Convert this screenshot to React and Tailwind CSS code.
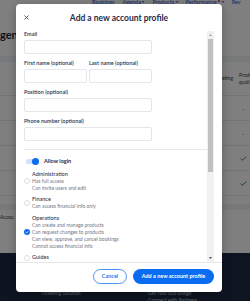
import React from 'react';

const roles = [
    { name: 'Administration', lines: ['Has full access', 'Can invite users and edit'], checked: false },
    { name: 'Finance', lines: ['Can access financial info only'], checked: false },
    {
        name: 'Operations',
        lines: [
            'Can create and manage products',
            'Can request changes to products',
            'Can view, approve, and cancel bookings',
            'Cannot access financial info',
        ],
        checked: true,
    },
    { name: 'Guides', lines: [], checked: false },
];

function Field({ label, children }) {
    return (
        <div className="flex flex-col">
            <label className="text-[5.5px] leading-[6px] font-semibold text-[#2b3550] mb-[3px]">{label}</label>
            {children}
        </div>
    );
}

function Input({ className = 'w-[128px]' }) {
    return <div className={`h-[14px] border border-[#e4e6ea] rounded-[2px] bg-white ${className}`} />;
}

function Radio({ checked }) {
    if (checked) {
        return (
            <svg width="6" height="6" viewBox="0 0 6 6" className="shrink-0">
                <circle cx="3" cy="3" r="3" fill="#0a6cf1" />
                <path d="M1.6 3.1 L2.6 4 L4.4 2.1" stroke="#fff" strokeWidth="0.8" fill="none" />
            </svg>
        );
    }
    return <span className="w-[6px] h-[6px] rounded-full border border-[#dcdfe4] bg-white shrink-0" />;
}

function Scrollbar() {
    return (
        <div className="w-[7px] mr-[8px] bg-[#f1f1f1] flex flex-col shrink-0">
            <div className="h-[8px] flex items-center justify-center">
                <svg width="3" height="2" viewBox="0 0 3 2"><path d="M1.5 0 L3 2 L0 2 Z" fill="#a3a3a3" /></svg>
            </div>
            <div className="h-[133px] mx-[1px] bg-[#c1c1c1]" />
            <div className="flex-1" />
            <div className="h-[8px] flex items-center justify-center">
                <svg width="3" height="2" viewBox="0 0 3 2"><path d="M0 0 L3 0 L1.5 2 Z" fill="#505050" /></svg>
            </div>
        </div>
    );
}

function Modal() {
    return (
        <div className="absolute left-[16px] top-[4px] w-[206px] h-[288px] bg-white rounded-[4px] flex flex-col shadow-[0_2px_10px_rgba(0,0,0,0.25)] overflow-hidden">
            {/* Header */}
            <div className="h-[27px] shrink-0 flex items-center px-[8px]">
                <div className="w-[12px] flex items-center">
                    <svg width="5" height="5" viewBox="0 0 5 5">
                        <path d="M0.5 0.5 L4.5 4.5 M4.5 0.5 L0.5 4.5" stroke="#2b3550" strokeWidth="0.8" />
                    </svg>
                </div>
                <h2 className="flex-1 text-center text-[8.5px] leading-[10px] font-bold text-[#1f2b4b] whitespace-nowrap">
                    Add a new account profile
                </h2>
                <div className="w-[12px]" />
            </div>

            {/* Body */}
            <div className="flex flex-1 min-h-0">
                <div className="flex-1 overflow-hidden pl-[8px]">
                    <div className="flex flex-col gap-[6px]">
                        <Field label="Email"><Input /></Field>
                        <div className="flex gap-[2px]">
                            <Field label="First name (optional)"><Input className="w-[63px]" /></Field>
                            <Field label="Last name (optional)"><Input className="w-[63px]" /></Field>
                        </div>
                        <Field label="Position (optional)"><Input /></Field>
                        <Field label="Phone number (optional)"><Input /></Field>
                    </div>

                    <div className="mt-[8px] h-px bg-[#e8e9ec]" />

                    <div className="mt-[8px] flex items-center h-[7px]">
                        <div className="ml-[2px] w-[13px] h-[7px] flex items-center">
                            <div className="w-[13px] h-[5px] rounded-full bg-[#cfe2fc] flex justify-end items-center">
                                <span className="w-[7px] h-[7px] rounded-full bg-[#0a6cf1]" />
                            </div>
                        </div>
                        <span className="ml-[5px] text-[5.5px] font-bold text-[#1f2b4b] leading-[7px]">Allow login</span>
                    </div>

                    <div className="mt-[5.5px] flex flex-col gap-[4.5px]">
                        {roles.map((r) => (
                            <div key={r.name} className="flex items-center gap-[2px]">
                                <Radio checked={r.checked} />
                                <div className="flex flex-col">
                                    <span className="text-[5.5px] leading-[7px] font-medium text-[#2b3550]">{r.name}</span>
                                    {r.lines.map((l) => (
                                        <span key={l} className="text-[5px] leading-[7px] text-[#70788a] whitespace-nowrap">{l}</span>
                                    ))}
                                </div>
                            </div>
                        ))}
                    </div>
                </div>
                <Scrollbar />
            </div>

            {/* Footer */}
            <div className="shrink-0 border-t border-[#e6e7ea] flex justify-end items-center gap-[6px] px-[8px] pt-[6px] pb-[8px]">
                <button className="w-[34px] h-[15px] rounded-full border border-[#4a92f4] text-[#0a6cf1] text-[5.5px] font-semibold bg-white">
                    Cancel
                </button>
                <button className="w-[81px] h-[15px] rounded-full bg-[#0a6cf1] text-white text-[5.5px] font-bold whitespace-nowrap">
                    Add a new account profile
                </button>
            </div>
        </div>
    );
}

function Check() {
    return (
        <svg width="7" height="5" viewBox="0 0 7 5">
            <path d="M0.6 2.6 L2.4 4.2 L6.4 0.6" stroke="#2f8a5f" strokeWidth="1" fill="none" />
        </svg>
    );
}

export default function App() {
    const navItems = [
        { label: 'Bookings' },
        { label: 'Agenda', caret: true },
        { label: 'Products', caret: true },
        { label: 'Performance', caret: true, dot: true },
        { label: 'Rev' },
    ];
    const rows = ['-', '-', 'check', 'check'];

    return (
        <div className="w-[250px] h-[301px] relative overflow-hidden bg-white font-['Lato',sans-serif] flex flex-col">
            {/* Page behind the dialog */}
            <nav className="h-[8px] -mt-[2px] shrink-0 flex items-center gap-[8px] pl-[92px] text-[5.5px] font-semibold text-[#3a6fd8] whitespace-nowrap">
                {navItems.map((n) => (
                    <span key={n.label} className="flex items-center gap-[1.5px]">
                        {n.label}
                        {n.dot && <span className="w-[2px] h-[2px] rounded-full bg-[#e53935] -mt-[3px]" />}
                        {n.caret && <span className="text-[4px]">▾</span>}
                    </span>
                ))}
            </nav>

            <h1 className="mt-[23px] text-[11px] leading-[12px] font-bold text-[#1b2236] whitespace-nowrap">gen</h1>

            <div className="mt-[15px] h-[6px] bg-[#f1f2f4] shrink-0" />

            <div className="h-[34px] shrink-0 flex items-center border-b border-[#e8e9ec] text-[5px] text-[#3b4254]">
                <div className="w-[233px] shrink-0 text-right">Marketing</div>
                <div className="ml-[6px] w-[24px] shrink-0 leading-[7px]">Product quality</div>
            </div>
            {rows.map((r, i) => (
                <div key={i} className="h-[25px] shrink-0 flex items-center pl-[239px] border-b border-[#e8e9ec] text-[6px] text-[#5a6070]">
                    <div className="w-[8px] flex justify-center">{r === 'check' ? <Check /> : '-'}</div>
                </div>
            ))}
            <div className="mt-[8px] h-[6px] bg-[#f1f2f4] shrink-0" />
            <div className="h-[16px] shrink-0 flex items-center text-[5px] text-[#2b3040] whitespace-nowrap">Accou</div>
            <div className="h-[27px] shrink-0" />

            <footer className="flex-1 bg-[#1c2844] pt-[37px] flex text-[5px] text-[#b9c0cf]">
                <div className="pl-[41px] w-[148px] shrink-0 leading-[7px]">Ticketing Solution</div>
                <div className="flex flex-col leading-[7px]">
                    <span>Get Your Eco-badge</span>
                    <span>Connect with Partners</span>
                </div>
            </footer>

            {/* Overlay + dialog */}
            <div className="absolute inset-0 bg-black/50" />
            <Modal />
        </div>
    );
}
